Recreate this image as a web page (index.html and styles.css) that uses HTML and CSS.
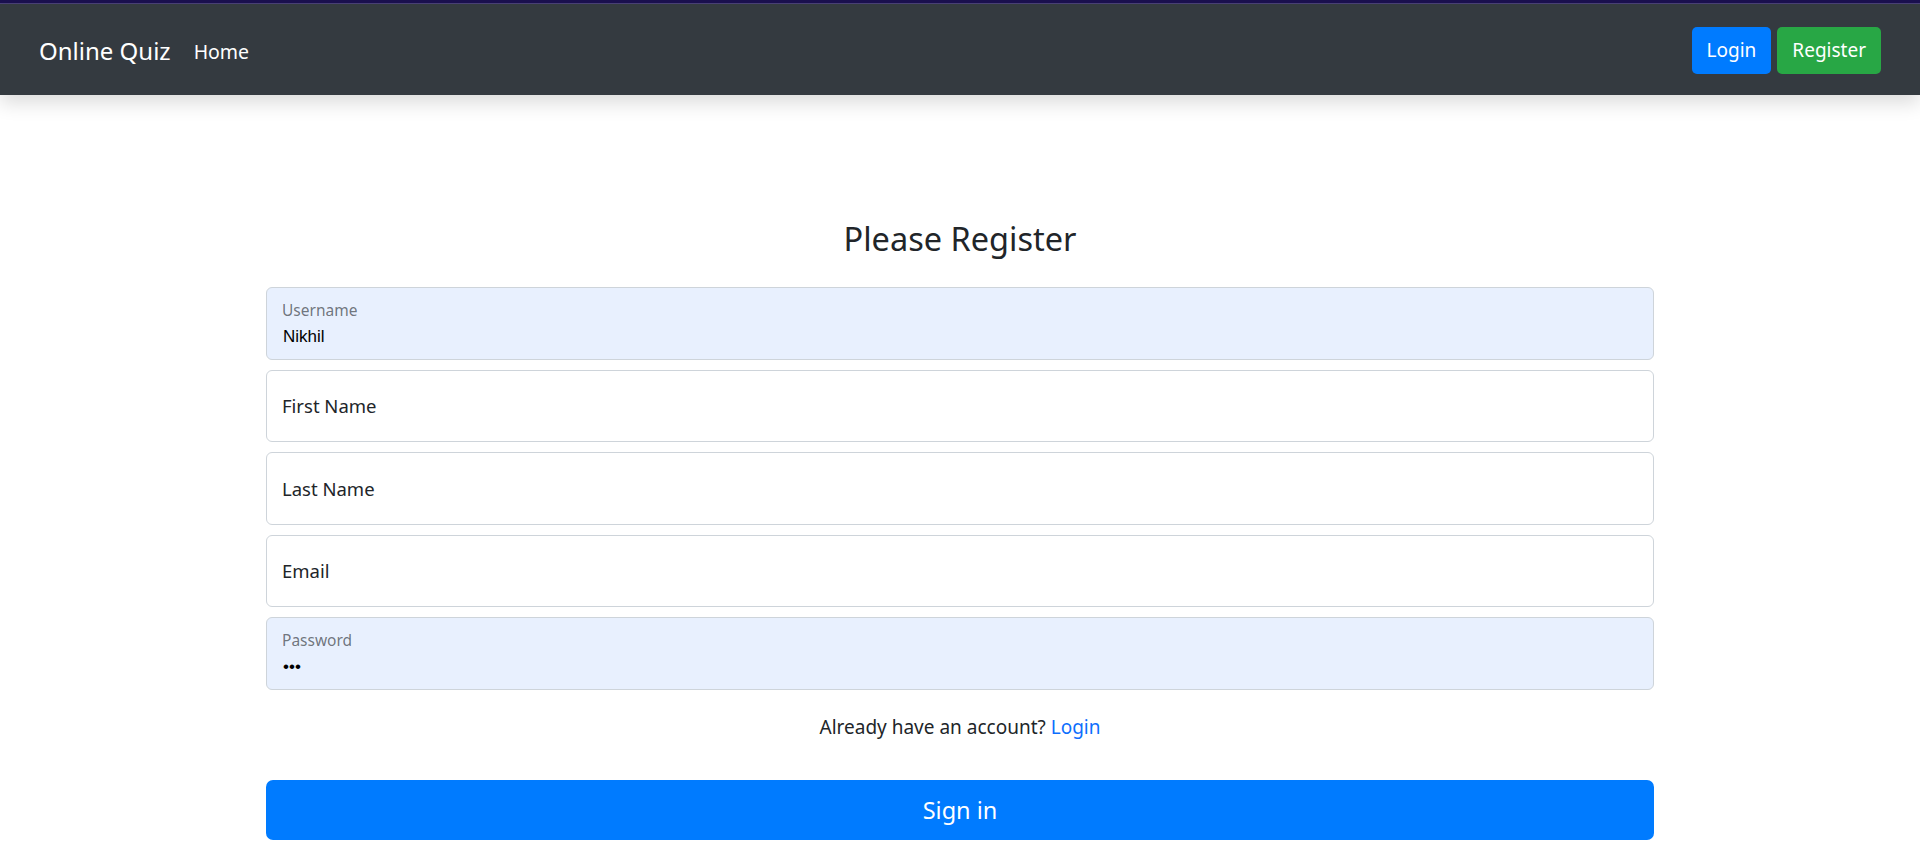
FILE: index.html
```html
<!DOCTYPE html>
<html lang="en">
<head>
<meta charset="utf-8">
<title>Online Quiz - Register</title>
<link rel="stylesheet" href="styles.css">
</head>
<body>
<div class="topband"></div>
<nav class="navbar">
  <div class="nav-left">
    <a class="brand" href="#">Online Quiz</a>
    <a class="nav-link" href="#">Home</a>
  </div>
  <div class="nav-right">
    <a class="btn btn-blue" href="#">Login</a>
    <a class="btn btn-green" href="#">Register</a>
  </div>
</nav>
<main class="main">
  <h1 class="title">Please Register</h1>
  <form class="form">
    <div class="field filled">
      <input class="control" id="username" type="text" value="Nikhil">
      <label class="float-label" for="username">Username</label>
    </div>
    <div class="field">
      <input class="control" id="first" type="text">
      <label class="float-label" for="first">First Name</label>
    </div>
    <div class="field">
      <input class="control" id="last" type="text">
      <label class="float-label" for="last">Last Name</label>
    </div>
    <div class="field">
      <input class="control" id="email" type="email">
      <label class="float-label" for="email">Email</label>
    </div>
    <div class="field filled">
      <input class="control" id="password" type="password" value="abc">
      <label class="float-label" for="password">Password</label>
    </div>
    <p class="already">Already have an account? <a href="#">Login</a></p>
    <button class="submit" type="button">Sign in</button>
  </form>
</main>
</body>
</html>
```

FILE: styles.css
```css
html, body {
  margin: 0;
  padding: 0;
  background: #fff;
  font-family: "Noto Sans", "Open Sans", sans-serif;
  color: #212529;
}

.topband {
  height: 3px;
  background: #1b1050;
  border-bottom: 1px solid #4a4178;
}

.navbar {
  height: 91px;
  background: #343a40;
  display: flex;
  align-items: center;
  justify-content: space-between;
  padding: 0 39px 0 39px;
  box-shadow: 0 8px 18px rgba(0, 0, 0, 0.14);
  position: relative;
}

.nav-left {
  display: flex;
  align-items: center;
  gap: 23px;
  margin-top: 2px;
}

.brand {
  color: #fff;
  text-decoration: none;
  font-size: 24px;
  line-height: 1;
}

.nav-link {
  color: #fff;
  text-decoration: none;
  font-size: 19.5px;
  line-height: 1;
  margin-top: 2px;
}

.nav-right {
  display: flex;
  gap: 6px;
  margin-top: 1px;
}

.btn {
  height: 47px;
  box-sizing: border-box;
  display: flex;
  align-items: center;
  padding: 0 15px;
  border-radius: 5px;
  color: #fff;
  text-decoration: none;
  font-size: 19px;
}

.btn-blue { background: #007bff; }
.btn-green { background: #28a745; }

.main {
  width: 1388px;
  margin: 0 auto;
  padding-top: 122px;
}

.title {
  margin: 0 0 28px;
  text-align: center;
  font-weight: 400;
  font-size: 32.5px;
  line-height: 42px;
  position: relative;
  top: 1px;
}

.form {
  display: flex;
  flex-direction: column;
}

.field {
  position: relative;
  margin-bottom: 10px;
}

.control {
  display: block;
  width: 100%;
  height: 72.5px;
  box-sizing: border-box;
  border: 1px solid #ced4da;
  border-radius: 6px;
  background: #fff;
  padding: 0 16px;
  font-family: "Noto Sans", sans-serif;
  font-size: 19px;
  color: #212529;
  outline: none;
}

.filled .control {
  background: #e8f0fe;
  padding-top: 28px;
  font-family: "Liberation Sans", Arial, sans-serif;
  font-size: 17px;
  color: #000;
}

.float-label {
  position: absolute;
  left: 16px;
  top: 0;
  height: 72.5px;
  display: flex;
  align-items: center;
  font-size: 18.5px;
  color: #212529;
  pointer-events: none;
}

.filled .float-label {
  height: auto;
  top: 12px;
  font-size: 15.5px;
  color: rgba(33, 37, 41, 0.62);
}

.already {
  margin: 12px 0 0;
  text-align: center;
  font-size: 19px;
  line-height: 30px;
}

.already a {
  color: #0d6efd;
  text-decoration: none;
}

.submit {
  margin-top: 38px;
  height: 60px;
  width: 100%;
  border: none;
  border-radius: 7px;
  background: #007bff;
  color: #fff;
  font-family: "Noto Sans", sans-serif;
  font-size: 23.5px;
  cursor: pointer;
}
```
